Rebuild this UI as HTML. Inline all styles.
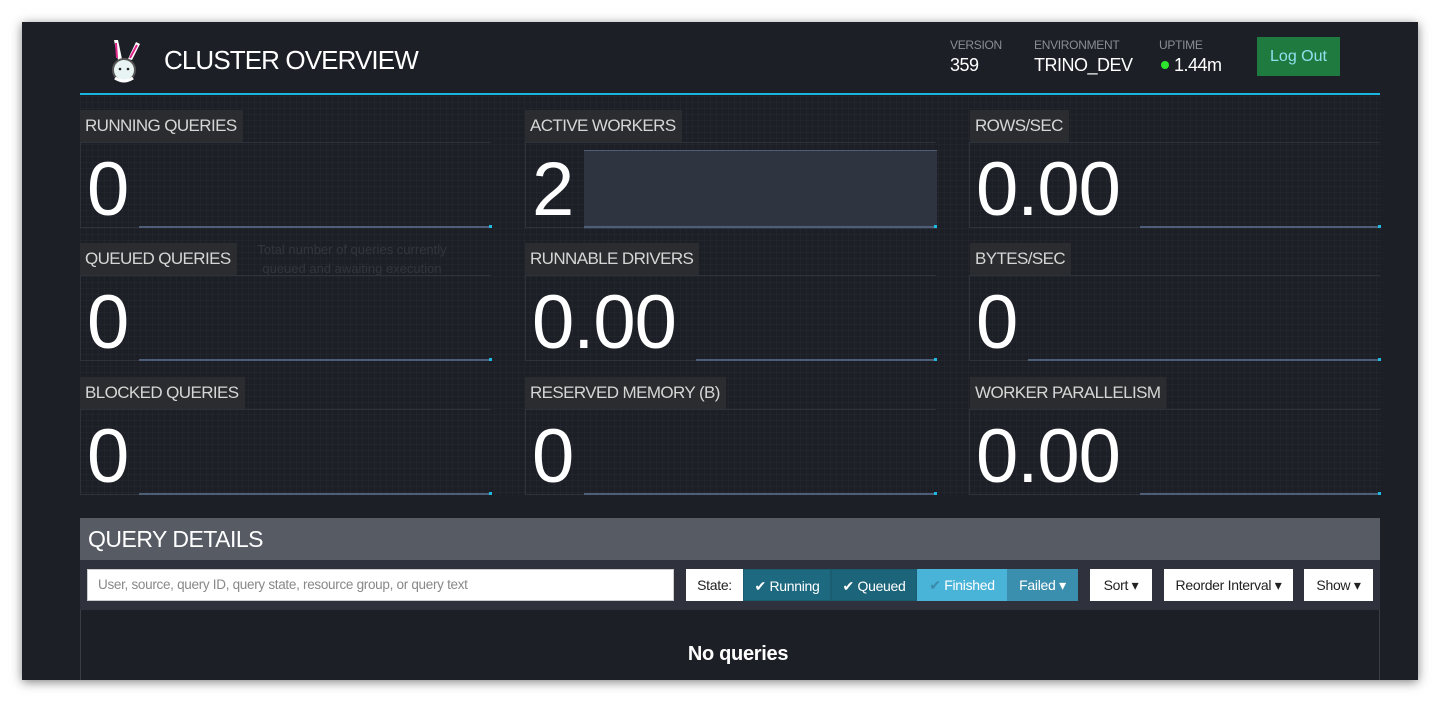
<!DOCTYPE html>
<html><head><style>
*{box-sizing:border-box;margin:0;padding:0}
body{width:1440px;height:702px;background:#fff;font-family:"Liberation Sans",sans-serif;position:relative;overflow:hidden}
.win{position:absolute;left:22px;top:22px;width:1396px;height:658px;background:#1c1f26;box-shadow:0 2px 10px rgba(0,0,0,.5);overflow:hidden}
.a{position:absolute}
.grid{position:absolute;left:58px;top:74px;width:1302px;height:400px;background-image:linear-gradient(rgba(255,255,255,.025) 1px,transparent 1px),linear-gradient(90deg,rgba(255,255,255,.025) 1px,transparent 1px);background-size:6px 6px}
.lbl{position:absolute;height:32px;background:#2b2c2f;color:#d6d6d6;font-size:17px;letter-spacing:-0.6px;line-height:32px;padding:0 6px 0 5px}
.val{position:absolute;width:411px;height:86px;border-left:1px solid #2e323a;border-bottom:1px solid #2e323a;border-top:1px solid #2e323a}
.num{position:absolute;left:6px;top:4px;color:#fff;font-size:76px;letter-spacing:-1px;line-height:86px}
.ln{position:absolute;height:2px;background:#4d5e76;bottom:-1px;right:0}
.ln:after{content:"";position:absolute;right:-1px;top:-1px;width:3px;height:3px;background:#1eb8e0}
.btn{position:absolute;top:547px;height:32px;background:#fff;color:#222;font-size:14px;letter-spacing:-0.3px;line-height:32px;text-align:center}
.hl{color:#8a8d93;font-size:12px;letter-spacing:-0.3px}
.hv{color:#fff;font-size:18px;letter-spacing:-0.5px}
</style></head><body>
<div class="win">
<div class="grid"></div>
<svg class="a" style="left:84px;top:16px" width="40" height="46" viewBox="0 0 40 46">
<path d="M12 22 L8 2 L12 2 L16 21Z" fill="#fff"/><path d="M11 20 L10 5" stroke="#e0248a" stroke-width="2"/>
<path d="M22 21 L30 4 L34 6 L26 22Z" fill="#fff"/><path d="M24 20 L31 7" stroke="#e0248a" stroke-width="2"/>
<circle cx="18" cy="32" r="11" fill="#e8f4f4" stroke="#555" stroke-width="2"/>
<circle cx="14" cy="31" r="1.3" fill="#222"/><circle cx="22" cy="31" r="1.3" fill="#222"/>
<path d="M9 40 Q18 46 27 40" stroke="#fff" stroke-width="3" fill="none"/>
</svg>
<div class="a" style="left:142px;top:23px;color:#fff;font-size:26px;letter-spacing:-0.9px">CLUSTER OVERVIEW</div>
<div class="a hl" style="left:928px;top:16px">VERSION</div>
<div class="a hv" style="left:928px;top:33px">359</div>
<div class="a hl" style="left:1012px;top:16px">ENVIRONMENT</div>
<div class="a hv" style="left:1012px;top:33px">TRINO_DEV</div>
<div class="a hl" style="left:1137px;top:16px">UPTIME</div>
<div class="a" style="left:1139px;top:39px;width:8px;height:8px;border-radius:50%;background:#2ee52e"></div>
<div class="a hv" style="left:1152px;top:33px">1.44m</div>
<div class="a" style="left:1235px;top:15px;width:83px;height:39px;background:#1e7a3e;color:#8fe0ee;font-size:16px;line-height:39px;text-align:center">Log Out</div>
<div class="a" style="left:58px;top:71px;width:1300px;height:2px;background:#1ab6e0"></div>

<div class="lbl" style="left:58px;top:88px">RUNNING QUERIES</div>
<div class="val" style="left:58px;top:120px"><div class="num">0</div><div class="ln" style="width:352px"></div></div>
<div class="lbl" style="left:503px;top:88px">ACTIVE WORKERS</div>
<div class="val" style="left:503px;top:120px"><div class="num">2</div><div class="a" style="left:58px;top:7px;width:353px;height:79px;background:#2f3441;border-top:1px solid #4d5e76"></div><div class="ln" style="width:352px"></div></div>
<div class="lbl" style="left:948px;top:88px">ROWS/SEC</div>
<div class="val" style="left:947px;top:120px"><div class="num">0.00</div><div class="ln" style="width:240px"></div></div>

<div class="lbl" style="left:58px;top:221px">QUEUED QUERIES</div>
<div class="a" style="left:230px;top:218px;width:200px;color:#33363c;font-size:13px;text-align:center;line-height:19px">Total number of queries currently queued and awaiting execution</div>
<div class="val" style="left:58px;top:253px"><div class="num">0</div><div class="ln" style="width:352px"></div></div>
<div class="lbl" style="left:503px;top:221px">RUNNABLE DRIVERS</div>
<div class="val" style="left:503px;top:253px"><div class="num">0.00</div><div class="ln" style="width:240px"></div></div>
<div class="lbl" style="left:948px;top:221px">BYTES/SEC</div>
<div class="val" style="left:947px;top:253px"><div class="num">0</div><div class="ln" style="width:352px"></div></div>

<div class="lbl" style="left:58px;top:355px">BLOCKED QUERIES</div>
<div class="val" style="left:58px;top:387px"><div class="num">0</div><div class="ln" style="width:352px"></div></div>
<div class="lbl" style="left:503px;top:355px">RESERVED MEMORY (B)</div>
<div class="val" style="left:503px;top:387px"><div class="num">0</div><div class="ln" style="width:352px"></div></div>
<div class="lbl" style="left:948px;top:355px">WORKER PARALLELISM</div>
<div class="val" style="left:947px;top:387px"><div class="num">0.00</div><div class="ln" style="width:240px"></div></div>

<div class="a" style="left:58px;top:496px;width:1300px;height:42px;background:#565b64;color:#fff;font-size:23px;letter-spacing:-0.5px;line-height:42px;padding-left:8px">QUERY DETAILS</div>
<div class="a" style="left:58px;top:538px;width:1300px;height:50px;background:#2f323c"></div>
<div class="a" style="left:58px;top:588px;width:1300px;height:80px;border-left:1px solid #3a3d44;border-right:1px solid #3a3d44"></div>
<div class="a" style="left:65px;top:547px;width:587px;height:32px;background:#fff;border:1px solid #ccc;color:#888;font-size:13.5px;letter-spacing:-0.3px;line-height:30px;padding-left:10px">User, source, query ID, query state, resource group, or query text</div>
<div class="btn" style="left:664px;width:57px">State:</div>
<div class="btn" style="left:721px;width:88px;background:#1d6a80;color:#fff;border:1px solid #1a5c70">✔ Running</div>
<div class="btn" style="left:809px;width:86px;background:#1c6479;color:#fff;border:1px solid #1a5c70">✔ Queued</div>
<div class="btn" style="left:895px;width:90px;background:#4ab3d8;color:#fff"><span style="color:#3a8aa8">✔</span> Finished</div>
<div class="btn" style="left:985px;width:71px;background:#3b8fae;color:#fff">Failed ▾</div>
<div class="btn" style="left:1068px;width:62px">Sort ▾</div>
<div class="btn" style="left:1142px;width:129px">Reorder Interval ▾</div>
<div class="btn" style="left:1282px;width:69px">Show ▾</div>
<div class="a" style="left:0;top:621px;width:1432px;text-align:center;color:#fff;font-size:20px;font-weight:bold;letter-spacing:-0.3px">No queries</div>
</div>
</body></html>
